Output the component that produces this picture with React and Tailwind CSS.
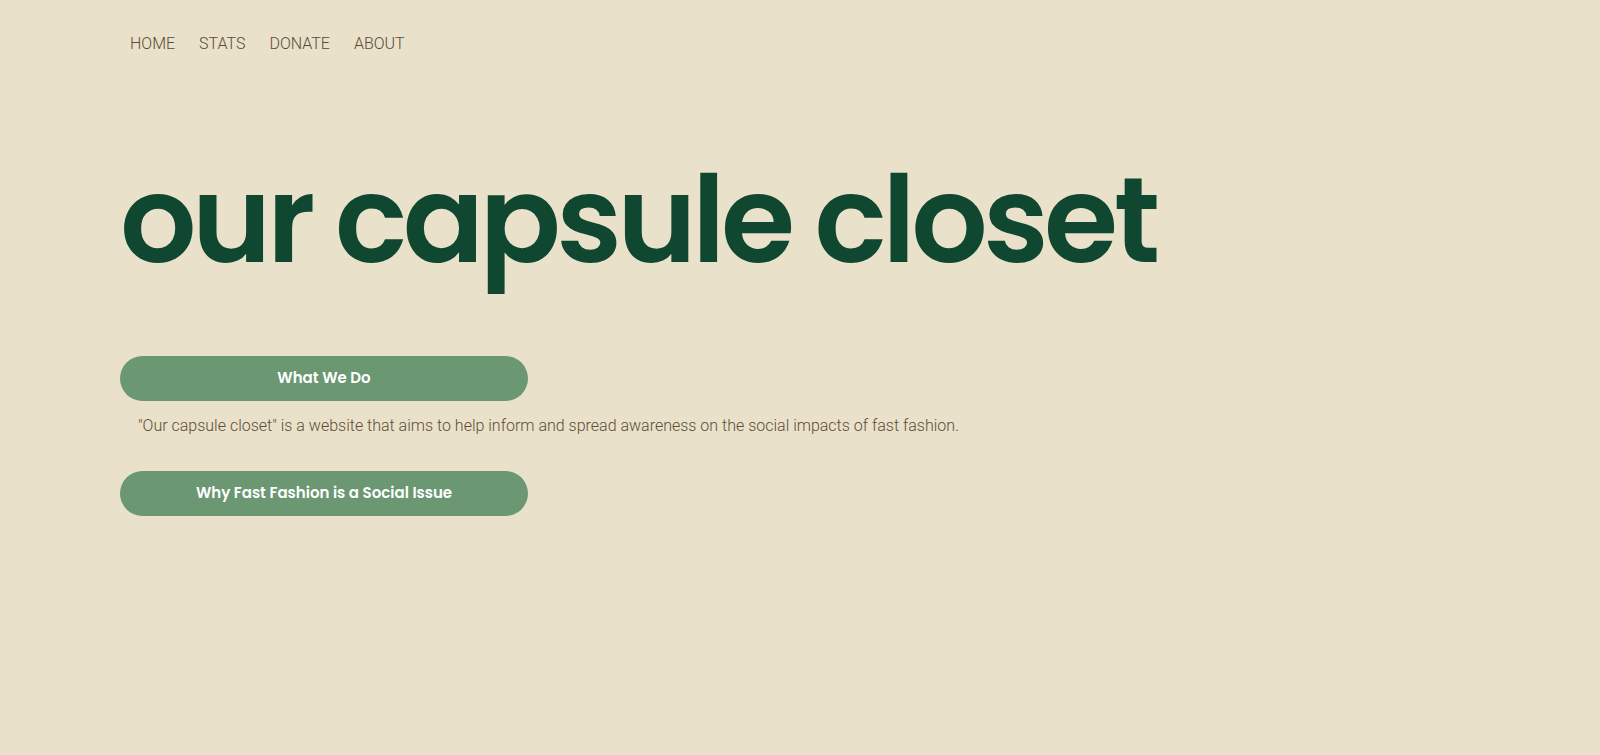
import React from 'react';

// Navigation principale en haut de page
const links = ['HOME', 'STATS', 'DONATE', 'ABOUT'];

const NavBar = () => (
    <nav className="flex items-center gap-[24px] pl-[130px] pt-[34px]">
        {links.map((l) => (
            <a
                key={l}
                href="#"
                className="text-[16px] font-light leading-[20px] text-[#5b4a37] font-['Roboto',sans-serif]"
            >
                {l}
            </a>
        ))}
    </nav>
);

// Bouton pilule vert
const PillButton = ({ children }) => (
    <button className="w-[408px] h-[45px] rounded-full bg-[#6b9773] text-white text-[15px] font-semibold font-['Poppins','Inter',sans-serif]">
        {children}
    </button>
);

const App = () => (
    <div className="min-h-[755px] bg-[#e9e1c9] font-['Roboto',sans-serif]">
        <NavBar />

        <main className="pl-[120px]">
            <h1 className="mt-[86px] text-[120px] leading-[160px] font-semibold tracking-[-4.5px] text-[#104731] font-['Poppins','Inter',sans-serif]">
                our capsule closet
            </h1>

            <div className="mt-[56px] flex flex-col items-start">
                <PillButton>What We Do</PillButton>
                <p className="mt-[15px] pl-[18px] text-[16px] font-light leading-[20px] text-[#5e4d38]">
                    "Our capsule closet" is a website that aims to help inform and spread awareness on the social impacts of fast fashion.
                </p>
                <div className="mt-[35px]">
                    <PillButton>Why Fast Fashion is a Social Issue</PillButton>
                </div>
            </div>
        </main>
    </div>
);

export default App;
